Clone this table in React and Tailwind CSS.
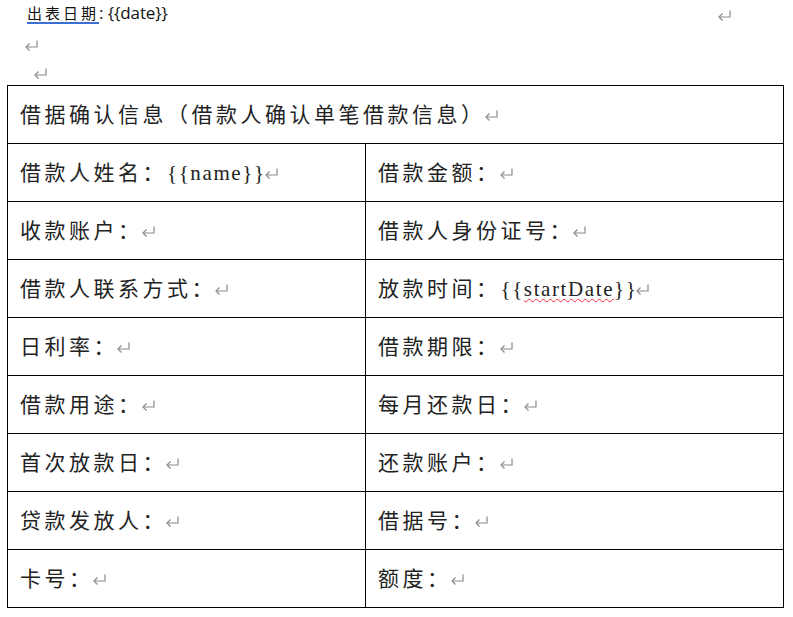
import React from "react";

const Ret = ({ className = "" }) => (
  <svg
    width="15"
    height="13"
    viewBox="0 0 15 13"
    className={"inline-block align-middle " + className}
    fill="none"
    stroke="#8a8a8a"
    strokeWidth="1.2"
  >
    <path d="M13 1.5V8H2" />
    <path d="M5.5 4.5L2 8L5.5 11.5" />
  </svg>
);

const serif = { fontFamily: '"Liberation Serif", "Noto Sans CJK SC", serif' };

// CJK runs get wide spacing like SimSun, latin runs a little less
const C = ({ children }) => <span className="tracking-[3.5px]">{children}</span>;
const L = ({ children }) => <span className="tracking-[1.6px]">{children}</span>;

const rows = [
  [<><C>借款人姓名：</C><L>{"{{name}}"}</L></>, <C>借款金额：</C>],
  [<C>收款账户：</C>, <C>借款人身份证号：</C>],
  [
    <C>借款人联系方式：</C>,
    <>
      <C>放款时间：</C>
      <L>
        {"{{"}
        <span className="underline decoration-wavy decoration-red-500 decoration-1 underline-offset-2">startDate</span>
        {"}}"}
      </L>
    </>,
  ],
  [<C>日利率：</C>, <C>借款期限：</C>],
  [<C>借款用途：</C>, <C>每月还款日：</C>],
  [<C>首次放款日：</C>, <C>还款账户：</C>],
  [<C>贷款发放人：</C>, <C>借据号：</C>],
  [<C>卡号：</C>, <C>额度：</C>],
];

const Cell = ({ children, colSpan }) => (
  <td colSpan={colSpan} className="border border-black h-[58px] px-3 pt-[3px] align-middle whitespace-nowrap">
    <span className="text-[21px] text-[#222]" style={serif}>
      {children}
    </span>
    <Ret className="-ml-0.5 -mt-1" />
  </td>
);

export default function App() {
  return (
    <div className="bg-white w-[793px] h-[617px] overflow-hidden">
      <div className="pl-[27px] pt-[3px] h-[85px] relative" style={{ fontFamily: '"Open Sans", "Noto Sans CJK SC", sans-serif' }}>
        <div className="text-[#111] leading-[20px] flex items-baseline">
          <span className="text-[15px] tracking-[3px] underline decoration-[#3b6fd4] decoration-2 underline-offset-[3px]">出表日期</span>
          <span className="text-[17px] tracking-[-0.1px]">: {"{{date}}"}</span>
        </div>
        <div className="absolute left-[717px] top-[6px] leading-none">
          <Ret />
        </div>
        <div className="absolute left-[24px] top-[36px] leading-none">
          <Ret />
        </div>
        <div className="absolute left-[33px] top-[64px] leading-none">
          <Ret />
        </div>
      </div>
      <table className="ml-[7px] border-collapse w-[777px] table-fixed">
        <colgroup>
          <col className="w-[358px]" />
          <col />
        </colgroup>
        <tbody>
          <tr>
            <Cell colSpan={2}>
              <C>借据确认信息（借款人确认单笔借款信息）</C>
            </Cell>
          </tr>
          {rows.map((r, i) => (
            <tr key={i}>
              <Cell>{r[0]}</Cell>
              <Cell>{r[1]}</Cell>
            </tr>
          ))}
        </tbody>
      </table>
    </div>
  );
}
